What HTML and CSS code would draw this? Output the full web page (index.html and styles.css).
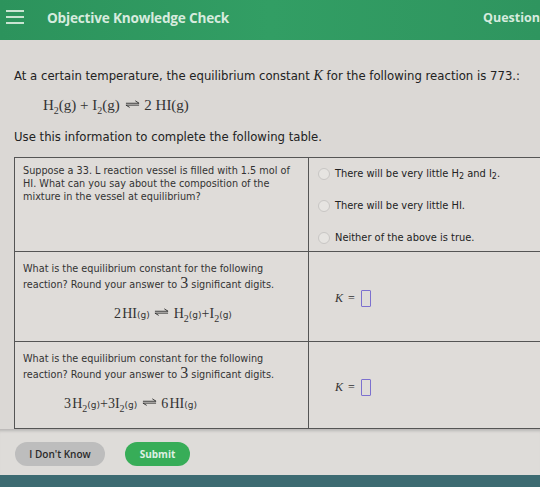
FILE: index.html
```html
<!DOCTYPE html>
<html>
<head>
<meta charset="utf-8">
<link rel="stylesheet" href="styles.css">
</head>
<body>
<header class="topbar">
  <div class="burger"><span></span><span></span><span></span></div>
  <div class="title">Objective Knowledge Check</div>
  <div class="qlabel">Question</div>
</header>
<main class="content">
  <p class="intro">At a certain temperature, the equilibrium constant <i class="kvar">K</i> for the following reaction is 773.:</p>
  <div class="main-eq">H<sub>2</sub>(g) + I<sub>2</sub>(g) <svg class="arrow" viewBox="0 0 16 8" width="15" height="8"><path d="M1 3.2 H15 L11 0.6" fill="none" stroke="#333" stroke-width="1"/><path d="M15 5.2 H1 L5 7.6" fill="none" stroke="#333" stroke-width="1"/></svg> 2 HI(g)</div>
  <p class="intro">Use this information to complete the following table.</p>

  <div class="table">
    <div class="cell q row1">
      Suppose a 33. L reaction vessel is filled with 1.5 mol of HI. What can you say about the composition of the mixture in the vessel at equilibrium?
    </div>
    <div class="cell a row1 options">
      <label class="opt"><span class="radio"></span><span>There will be very little H<sub>2</sub> and I<sub>2</sub>.</span></label>
      <label class="opt"><span class="radio"></span><span>There will be very little HI.</span></label>
      <label class="opt"><span class="radio"></span><span>Neither of the above is true.</span></label>
    </div>

    <div class="cell q row2">
      <div>What is the equilibrium constant for the following reaction? Round your answer to <span class="three">3</span> significant digits.</div>
      <div class="eq eq2">2&#8202;HI<span class="g">(g)</span> <svg class="arrow" viewBox="0 0 16 8" width="15" height="8"><path d="M1 3.2 H15 L11 0.6" fill="none" stroke="#333" stroke-width="1"/><path d="M15 5.2 H1 L5 7.6" fill="none" stroke="#333" stroke-width="1"/></svg> H<sub>2</sub><span class="g">(g)</span>+I<sub>2</sub><span class="g">(g)</span></div>
    </div>
    <div class="cell a row2 kcell">
      <div class="kans"><i class="kvar">K</i> <span class="eqs">=</span> <span class="box"></span></div>
    </div>

    <div class="cell q row3">
      <div>What is the equilibrium constant for the following reaction? Round your answer to <span class="three">3</span> significant digits.</div>
      <div class="eq eq3">3&#8202;H<sub>2</sub><span class="g">(g)</span>+3I<sub>2</sub><span class="g">(g)</span> <svg class="arrow" viewBox="0 0 16 8" width="15" height="8"><path d="M1 3.2 H15 L11 0.6" fill="none" stroke="#333" stroke-width="1"/><path d="M15 5.2 H1 L5 7.6" fill="none" stroke="#333" stroke-width="1"/></svg> 6&#8202;HI<span class="g">(g)</span></div>
    </div>
    <div class="cell a row3 kcell">
      <div class="kans"><i class="kvar">K</i> <span class="eqs">=</span> <span class="box"></span></div>
    </div>
  </div>
</main>
<footer class="footer">
  <button class="btn dunno">I Don't Know</button>
  <button class="btn submit">Submit</button>
</footer>
<div class="bottomband"></div>
</body>
</html>
```
FILE: styles.css
```css
html, body {
  margin: 0;
  padding: 0;
}
body {
  width: 540px;
  height: 487px;
  overflow: hidden;
  background: #dbd8d5;
  font-family: "DejaVu Sans", Verdana, sans-serif;
  color: #222;
  display: flex;
  flex-direction: column;
}
.topbar {
  height: 40px;
  flex: none;
  background: linear-gradient(90deg, #2c935c, #329e64 50%, #2f955f);
  display: flex;
  align-items: center;
  padding: 0 0 6px 6px;
  box-sizing: border-box;
  font-family: "Open Sans", "Liberation Sans", sans-serif;
  font-weight: 700;
  color: #d6ebde;
  overflow: hidden;
}
.burger {
  width: 18px;
  display: flex;
  flex-direction: column;
  gap: 4px;
}
.burger span {
  display: block;
  height: 2px;
  background: #c9e4d2;
}
.title {
  margin-left: 23px;
  font-size: 13.6px;
  letter-spacing: -0.2px;
}
.qlabel {
  margin-left: auto;
  font-size: 12.5px;
  white-space: nowrap;
}
.content {
  flex: 1;
  padding: 0 0 0 14px;
}
.intro {
  margin: 29px 0 0;
  font-size: 11.7px;
  line-height: 14px;
}
.intro + .main-eq + .intro {
  margin-top: 16px;
}
.kvar {
  font-family: "Liberation Serif", serif;
  font-size: 14px;
}
.main-eq {
  margin: 14px 0 0 29px;
  font-family: "Liberation Serif", serif;
  font-size: 15px;
  color: #333;
}
.main-eq sub, .eq sub {
  font-size: 10px;
  vertical-align: -4px;
  line-height: 0;
}
.arrow {
  vertical-align: 2px;
  margin: 0 1px;
}
.table {
  margin-top: 13px;
  display: grid;
  grid-template-columns: 294px 240px;
  grid-template-rows: 94px 90px 87px;
  border-top: 1px solid #555;
  border-left: 1px solid #555;
  background: #dfdcd9;
}
.cell {
  border-right: 1px solid #555;
  border-bottom: 1px solid #555;
  box-sizing: border-box;
}
.q {
  padding: 6px 8px 0 8px;
  font-size: 9.7px;
  line-height: 13px;
  color: #333;
}
.row2.q, .row3.q {
  padding-top: 9px;
  line-height: 16px;
}
.three {
  font-family: "Liberation Serif", serif;
  font-size: 16px;
  line-height: 10px;
}
.eq {
  font-family: "Liberation Serif", serif;
  font-size: 14px;
  margin-top: 13px;
  color: #333;
}
.eq2 { margin-left: 91px; }
.eq3 { margin-left: 41px; }
.g {
  font-family: "DejaVu Sans", sans-serif;
  font-size: 9px;
}
.options {
  display: flex;
  flex-direction: column;
  padding: 7px 0 0 9px;
  gap: 15px;
}
.opt {
  display: flex;
  align-items: center;
  font-size: 9.9px;
  color: #222;
  line-height: 17px;
}
.opt sub {
  font-size: 8px;
  vertical-align: -2px;
  line-height: 0;
}
.radio {
  flex: none;
  width: 10px;
  height: 10px;
  border-radius: 50%;
  border: 1px solid #c8c6c4;
  background: #e6e4e1;
  margin-right: 5px;
}
.kcell {
  display: flex;
  align-items: center;
  padding-left: 26px;
}
.kans {
  display: flex;
  align-items: center;
  gap: 5px;
  font-family: "Liberation Serif", serif;
  color: #333;
  font-size: 12px;
  margin-top: 4px;
}
.kans .kvar { font-size: 12px; }
.box {
  width: 8px;
  height: 15px;
  border: 1.5px solid #7c70cf;
  border-radius: 1px;
  margin-left: 1px;
}
.footer {
  flex: none;
  height: 46px;
  box-sizing: border-box;
  background: #dedcd9;
  box-shadow: inset 0 4px 3px -2px #b9b7b5;
  display: flex;
  align-items: center;
  padding: 4px 0 0 15px;
  gap: 20px;
}
.btn {
  border: none;
  border-radius: 13px;
  height: 24px;
  font-family: "Open Sans", "Liberation Sans", sans-serif;
  font-weight: 700;
  font-size: 10px;
  padding: 0;
}
.dunno {
  width: 90px;
  background: #bdbdbd;
  color: #2a2a2a;
  font-weight: 600;
}
.submit {
  width: 65px;
  background: #37ad58;
  color: #dff0e3;
}
.bottomband {
  flex: none;
  height: 12px;
  background: #3d6b72;
}
```
